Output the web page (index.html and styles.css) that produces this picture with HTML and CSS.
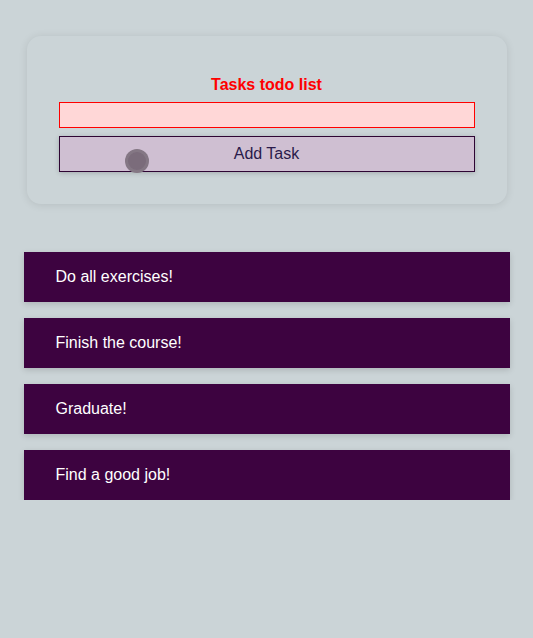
FILE: index.html
```html
<!DOCTYPE html>
<html>
<head>
<meta charset="utf-8">
<link rel="stylesheet" href="styles.css">
</head>
<body>
<div class="page">
  <div class="card">
    <h1 class="title">Tasks todo list</h1>
    <input class="task-input" type="text">
    <button class="add-btn">Add Task</button>
    <span class="cursor-dot"></span>
  </div>
  <ul class="tasks">
    <li class="task">Do all exercises!</li>
    <li class="task">Finish the course!</li>
    <li class="task">Graduate!</li>
    <li class="task">Find a good job!</li>
  </ul>
</div>
</body>
</html>
```
FILE: styles.css
```css
html, body {
  margin: 0;
  padding: 0;
  background: #cbd4d7;
  font-family: "Liberation Sans", Arial, sans-serif;
}
.page {
  width: 486px;
  margin: 0 auto;
  padding-top: 36px;
}
.card {
  position: relative;
  margin: 0 3px;
  padding: 39px 32px 32px;
  background: #cbd4d7;
  border-radius: 14px;
  box-shadow: 0 1px 8px rgba(0, 0, 0, 0.1);
  display: flex;
  flex-direction: column;
}
.title {
  margin: 0 0 7px;
  font-size: 16px;
  line-height: 20px;
  font-weight: bold;
  color: #ff0000;
  text-align: center;
}
.task-input {
  box-sizing: border-box;
  height: 26px;
  margin: 0;
  border: 1px solid #ff0000;
  background: #ffd7d7;
  outline: none;
  padding: 0 6px;
}
.add-btn {
  box-sizing: border-box;
  height: 36px;
  margin: 8px 0 0;
  border: 1px solid #2e0533;
  background: #cfbfd2;
  color: #2a1a4a;
  font-family: "Liberation Sans", Arial, sans-serif;
  font-size: 16px;
  box-shadow: 0 1px 5px rgba(0, 0, 0, 0.2);
  padding: 0;
}
.cursor-dot {
  position: absolute;
  left: 98px;
  top: 113px;
  width: 18px;
  height: 18px;
  border-radius: 50%;
  background: #7b6c7b;
  border: 3px solid rgba(140, 130, 140, 0.55);
}
.tasks {
  list-style: none;
  margin: 48px 0 0;
  padding: 0;
  display: flex;
  flex-direction: column;
  gap: 16px;
}
.task {
  height: 50px;
  display: flex;
  align-items: center;
  padding-left: 32px;
  background: #3d0340;
  color: #ffffff;
  font-size: 16px;
  box-shadow: 0 2px 6px rgba(0, 0, 0, 0.15);
}
```
